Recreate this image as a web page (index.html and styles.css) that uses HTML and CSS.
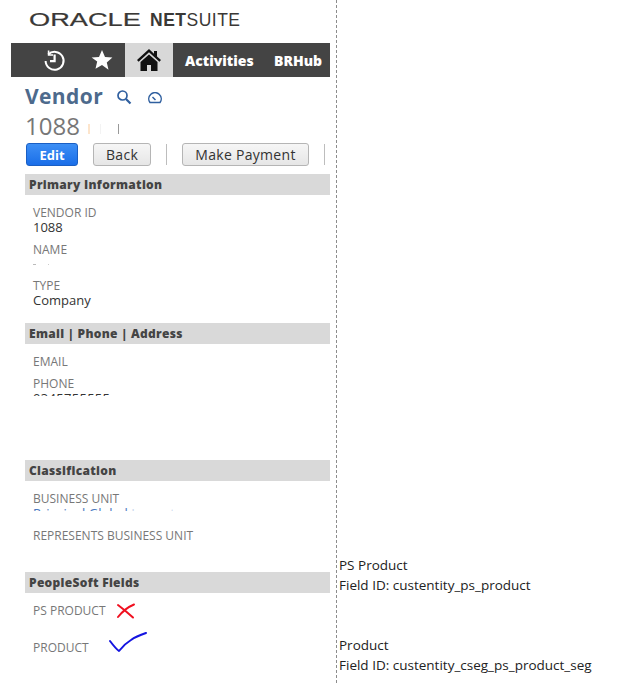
FILE: index.html
```html
<!DOCTYPE html>
<html lang="en">
<head>
<meta charset="utf-8">
<title>Vendor</title>
<link rel="stylesheet" href="styles.css">
</head>
<body>
<div class="page">
  <main class="record">
    <div class="logo"><span class="oracle">ORACLE</span><span class="netsuite"><b>NET</b>SUITE</span></div>
    <nav class="nav">
      <span class="nav-icon clock">
        <svg width="24" height="24" viewBox="0 0 24 24" fill="none" stroke="#fff" stroke-width="2"><path d="M6.200 6.500A9 9 0 1 1 3.600 13"/><path d="M6.600 2.600v4.400h4.400" stroke-width="1.600"/><path d="M12.600 6.500v6.700H8" stroke-width="2.200"/></svg>
      </span>
      <span class="nav-icon star">
        <svg width="22" height="22" viewBox="0 0 22 22"><path fill="#fff" d="M11 1l3 7 7.400.6-5.600 4.900 1.700 7.300L11 16l-6.500 3.800 1.700-7.300L.6 8.600 8 8z"/></svg>
      </span>
      <span class="nav-icon home">
        <svg width="26" height="24" viewBox="0 0 26 24"><path fill="#111" d="M13 1L1 12l1.600 1.700L13 4.300l10.400 9.400L25 12l-4-3.600V3h-3v2.700z"/><path fill="#111" d="M13 6.500L4.500 14v9h6.500v-6h4v6h6.500v-9z"/></svg>
      </span>
      <span class="nav-link activities">Activities</span>
      <span class="nav-link brhub">BRHub</span>
    </nav>
    <div class="title-row">
      <h1 class="title">Vendor</h1>
      <svg class="search" width="16" height="16" viewBox="0 0 16 16" fill="none" stroke="#2f5f9f" stroke-width="1.700"><circle cx="6.500" cy="6.500" r="4.500"/><path d="M10 10l4.500 4.500" stroke-width="2.200"/></svg>
      <svg class="gauge" width="16" height="12" viewBox="0 0 16 12" fill="none" stroke="#2f5f9f" stroke-width="1.500"><path d="M3 10.500h10a6.200 6.200 0 1 0-10 0z"/><path d="M5.500 5l3 3"/></svg>
    </div>
    <div class="record-id">1088<span class="smudge"></span></div>
    <div class="actions">
      <button class="btn primary">Edit</button>
      <button class="btn back">Back</button>
      <span class="sep"></span>
      <button class="btn pay">Make Payment</button>
      <span class="sep"></span>
    </div>

    <section class="section first">
      <h2 class="section-head">Primary Information</h2>
      <div class="fields">
        <div><div class="label">VENDOR ID</div><div class="value">1088</div></div>
        <div><div class="label">NAME</div><div class="value hidden-name">S...</div></div>
        <div><div class="label">TYPE</div><div class="value">Company</div></div>
      </div>
    </section>

    <section class="section second">
      <h2 class="section-head">Email | Phone | Address</h2>
      <div class="fields">
        <div class="label">EMAIL</div>
        <div><div class="label">PHONE</div><div class="value phone">0345755555</div></div>
      </div>
    </section>

    <section class="section third">
      <h2 class="section-head">Classification</h2>
      <div class="fields">
        <div><div class="label">BUSINESS UNIT</div><div class="value unit">Principal Global <span class="faint">Investors</span></div></div>
        <div class="label">REPRESENTS BUSINESS UNIT</div>
      </div>
    </section>

    <section class="section fourth">
      <h2 class="section-head">PeopleSoft Fields</h2>
      <div class="fields wide">
        <div class="label mark-row">PS PRODUCT
          <svg class="cross" width="20" height="16" viewBox="0 0 20 16" fill="none" stroke="#f01020" stroke-width="2" stroke-linecap="round"><path d="M2 2c4 3 10 8 15 12.500"/><path d="M18 1.500C12 4 6 9 2 14"/></svg>
        </div>
        <div class="label mark-row">PRODUCT
          <svg class="check" width="38" height="22" viewBox="0 0 38 22" fill="none" stroke="#1414e0" stroke-width="2" stroke-linecap="round" stroke-linejoin="round"><path d="M1 9c3 4 6 8 9 10 3-4 7-8 12-11 4-3 9-5 15-7"/></svg>
        </div>
      </div>
    </section>
  </main>
  <aside class="notes">
    <p class="note">PS Product<br>Field ID: custentity_ps_product</p>
    <p class="note">Product<br>Field ID: custentity_cseg_ps_product_seg</p>
  </aside>
</div>
</body>
</html>
```
FILE: styles.css
```css
* { box-sizing: border-box; }
html, body { margin: 0; padding: 0; background: #fff; }
body { font-family: "Open Sans", "Liberation Sans", sans-serif; width: 623px; height: 683px; overflow: hidden; }
.page { display: flex; height: 683px; }
.record { width: 337px; height: 683px; border-right: 1px dashed #8c8c8c; padding: 0 6px 0 11px; }

.logo { display: flex; align-items: center; height: 43px; padding: 0 0 4px 18px; color: #3a3836; font-family: "Liberation Sans", sans-serif; font-size: 18px; line-height: 20px; }
.oracle { display: inline-block; width: 74px; transform: scaleX(1.51); transform-origin: left center; margin-right: 47px; -webkit-text-stroke: .2px #3a3836; }
.netsuite { letter-spacing: .5px; font-size: 17.500px; white-space: nowrap; }
.netsuite b { font-weight: 700; }

.nav { display: flex; align-items: center; width: 319px; height: 34px; background: #444; }
.nav-icon { display: flex; align-items: center; justify-content: center; height: 34px; }
.clock { width: 31px; margin-left: 27px; }
.star { width: 24px; margin-left: 21px; }
.home { width: 48px; margin-left: 11px; background: #d8d8d8; }
.nav-link { color: #fff; font-weight: 800; font-size: 14px; white-space: nowrap; }
.activities { margin-left: 12px; width: 89px; }

.title-row { display: flex; align-items: center; height: 38px; padding: 0 0 0 14px; }
.title { margin: 0; font-size: 21px; font-weight: 700; color: #4d6a8c; line-height: 38px; letter-spacing: .4px; }
.search { margin-left: 13px; margin-top: 2px; }
.gauge { margin-left: 15px; margin-top: 3px; }

.record-id { height: 28px; margin-top: -3px; padding-left: 14px; font-size: 24px; line-height: 28px; color: #777; display: flex; align-items: center; }
.smudge { display: block; width: 34px; height: 10px; margin-left: 8px; margin-top: 6px; background: linear-gradient(90deg, #fde5cc 0 2px, #fff 2px 12px, #f3f3f3 12px 13px, #fff 13px 30px, #999 30px 31px, #fff 31px); }

.actions { display: flex; align-items: center; height: 23px; margin-top: 3px; padding-left: 15px; }
.btn { height: 23px; padding: 0; border-radius: 3px; font-family: "Open Sans", "Liberation Sans", sans-serif; font-size: 14px; }
.primary { width: 52px; background: linear-gradient(#3d8ff5, #1a6ee8); border: 1px solid #1a5fc4; color: #fff; font-size: 13px; font-weight: 700; }
.back, .pay { background: linear-gradient(#f6f6f6, #e6e6e6); border: 1px solid #b5b5b5; color: #333; letter-spacing: .3px; }
.back { width: 58px; margin-left: 15px; }
.pay { width: 127px; margin-left: 15px; }
.sep { width: 1px; height: 21px; background: #bdbdbd; margin-left: 15px; }

.section-head { margin: 0 0 0 14px; height: 21px; background: #d9d9d9; width: 305px; padding-left: 4px; font-size: 12px; line-height: 21px; font-weight: 800; color: #444; letter-spacing: .3px; }
.section.first { margin-top: 8px; }
.section.second { margin-top: 15px; }
.section.third { margin-top: 64px; }
.section.fourth { margin-top: 29px; }
.fields { display: flex; flex-direction: column; gap: 7px; padding: 10px 0 0 22px; }
.fields.wide { gap: 22px; }
.label { font-size: 12px; line-height: 15px; color: #777; white-space: nowrap; }
.value { font-size: 13px; line-height: 15px; color: #333; white-space: nowrap; }
.hidden-name { height: 14px; color: #fff; position: relative; }
.hidden-name::after { content: ""; position: absolute; left: 0; top: 7px; width: 17px; height: 1px; background: linear-gradient(90deg, #bbb 0 3px, #fff 3px 15px, #ccc 15px 16px, #fff 16px); }
.phone { height: 5px; letter-spacing: .3px; clip-path: inset(0 0 0 0); }
.unit { height: 15px; color: #4a78c0; clip-path: inset(0 0 10px 0); }
.faint { opacity: .3; letter-spacing: 1.500px; }
.mark-row { position: relative; }
.cross { position: absolute; left: 83px; top: 0; }
.check { position: absolute; left: 76px; top: -8px; }

.notes { padding: 555px 0 0 2px; font-family: "Open Sans", "Liberation Sans", sans-serif; font-size: 13.500px; line-height: 20px; color: #222; }
.note { margin: 0 0 40px; white-space: nowrap; }
```
